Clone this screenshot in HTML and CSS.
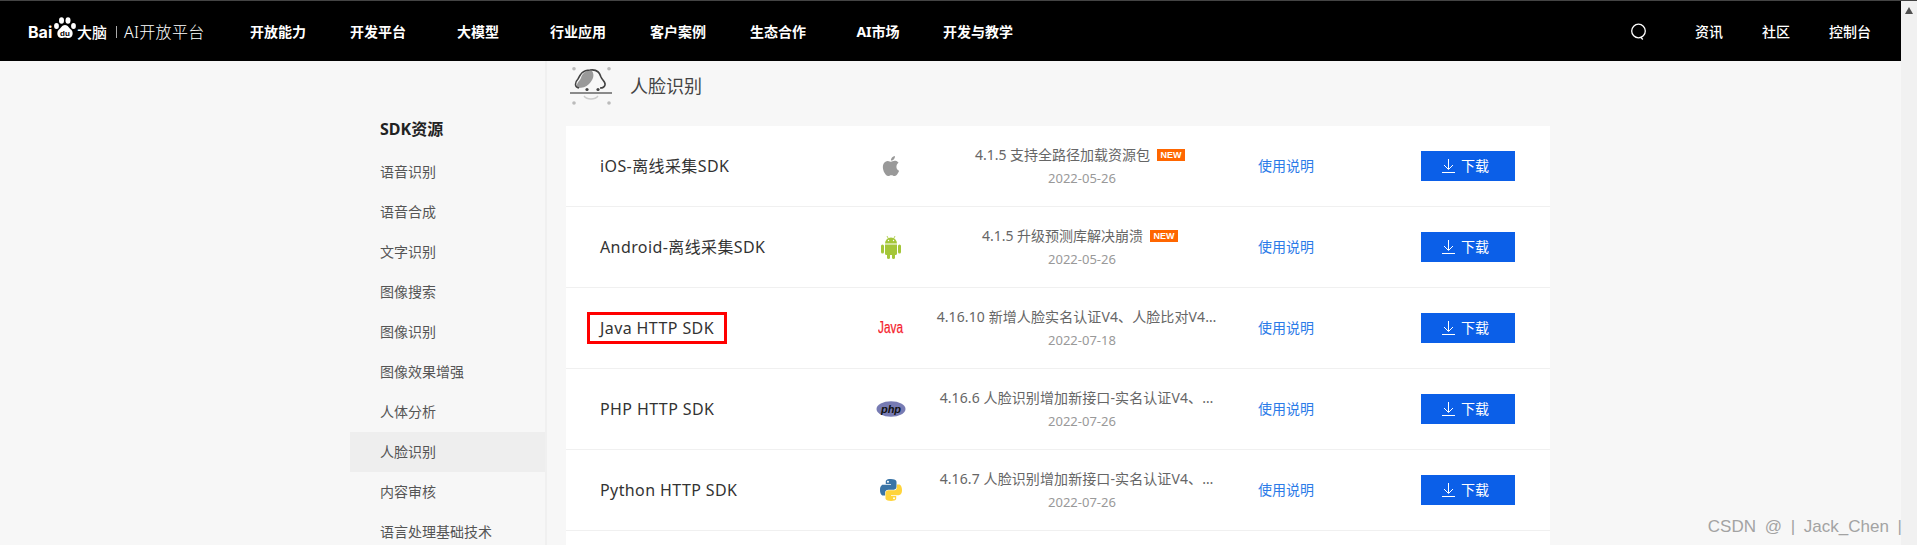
FILE: index.html
```html
<!DOCTYPE html>
<html lang="zh-CN">
<head>
<meta charset="utf-8">
<title>SDK资源</title>
<link rel="stylesheet" href="styles.css">
</head>
<body>
<div class="root">
  <div class="page">
    <header class="header">
      <div class="logo">
        <span class="logo-bai">Bai</span>
        <svg class="logo-paw" width="24" height="24" viewBox="0 0 24 24">
          <g fill="#fff">
            <ellipse cx="3.500" cy="10" rx="2.400" ry="3"/>
            <ellipse cx="8.500" cy="4.500" rx="2.500" ry="3.200"/>
            <ellipse cx="15" cy="4.500" rx="2.500" ry="3.200"/>
            <ellipse cx="20.500" cy="10" rx="2.400" ry="3"/>
            <path d="M12 9c3 0 4 3 6 4.500 2.500 2 2.500 8-2 8.500-1.500.2-2.500-.5-4-.5s-2.500.7-4 .5c-4.500-.5-4.500-6.500-2-8.500C8 12 9 9 12 9z"/>
          </g>
          <text class="logo-du" x="12" y="19.500" text-anchor="middle">du</text>
        </svg>
        <span class="logo-brain">大脑</span>
        <span class="logo-sep"></span>
        <span class="logo-ai">AI开放平台</span>
      </div>
      <nav class="nav">
        <a class="nav-item">开放能力</a>
        <a class="nav-item">开发平台</a>
        <a class="nav-item">大模型</a>
        <a class="nav-item">行业应用</a>
        <a class="nav-item">客户案例</a>
        <a class="nav-item">生态合作</a>
        <a class="nav-item">AI市场</a>
        <a class="nav-item">开发与教学</a>
      </nav>
      <div class="tools">
        <svg class="search" width="17" height="17" viewBox="0 0 17 17" fill="none" stroke="#fff" stroke-width="1.300">
          <circle cx="8.500" cy="8" r="6.800"/>
          <path d="M11 14.500l1.800 2"/>
        </svg>
        <a class="tool">资讯</a>
        <a class="tool">社区</a>
        <a class="tool">控制台</a>
      </div>
    </header>
    <main class="main">
      <aside class="side">
        <h3 class="side-title">SDK资源</h3>
        <a class="side-item">语音识别</a>
        <a class="side-item">语音合成</a>
        <a class="side-item">文字识别</a>
        <a class="side-item">图像搜索</a>
        <a class="side-item">图像识别</a>
        <a class="side-item">图像效果增强</a>
        <a class="side-item">人体分析</a>
        <a class="side-item active">人脸识别</a>
        <a class="side-item">内容审核</a>
        <a class="side-item">语言处理基础技术</a>
      </aside>
      <section class="content">
        <div class="title-bar">
          <svg width="42" height="38" viewBox="0 0 42 38">
            <g fill="#bbb">
              <circle cx="4" cy="1.800" r="1.800"/>
              <circle cx="39" cy="1.800" r="1.800"/>
              <circle cx="4" cy="36" r="1.800"/>
              <circle cx="39" cy="36" r="1.800"/>
            </g>
            <path d="M8 21C5 17 9 15 11 11 12 6 17 3 22 4c3 4 1 9-3 13-3 3-7 4-11 4z" fill="#999"/>
            <path d="M9 21C4 20 5 15 8 12 10 8 12 3 20 3c7-1 10 3 11 7 1 3 5 5 4 8-.5 2-2 3-5 3" fill="none" stroke="#444" stroke-width="1.600"/>
            <circle cx="17" cy="22.500" r="1.600" fill="#444"/>
            <circle cx="28" cy="22.500" r="1.600" fill="#444"/>
            <path d="M0 26h42" stroke="#666" stroke-width="1.600"/>
            <path d="M14 29c3 4 11 4 14 0" fill="none" stroke="#ccc" stroke-width="1.300"/>
          </svg>
          <h2 class="title">人脸识别</h2>
        </div>
        <div class="card">
          <div class="row">
            <span class="name">iOS-离线采集SDK</span>
            <span class="icon">
              <svg width="24" height="24" viewBox="0 0 24 24" fill="#999"><path d="M18.710 19.500c-.83 1.240-1.710 2.450-3.050 2.470-1.340.03-1.770-.79-3.290-.79-1.530 0-2 .77-3.270.82-1.310.05-2.300-1.320-3.140-2.530C4.250 17 2.940 12.450 4.700 9.390c.87-1.520 2.430-2.480 4.120-2.510 1.280-.02 2.500.87 3.290.87.78 0 2.260-1.070 3.810-.91.65.03 2.470.26 3.640 1.980-.09.06-2.170 1.280-2.150 3.810.03 3.020 2.650 4.030 2.680 4.040-.03.07-.42 1.440-1.380 2.830M13 3.500c.73-.83 1.940-1.460 2.940-1.500.13 1.170-.34 2.350-1.040 3.190-.69.85-1.830 1.510-2.950 1.420-.15-1.150.41-2.350 1.050-3.110z"/></svg>
            </span>
            <div class="info">
              <div class="desc">4.1.5 支持全路径加载资源包<span class="badge">NEW</span></div>
              <div class="date">2022-05-26</div>
            </div>
            <a class="guide">使用说明</a>
            <a class="btn"><svg width="13" height="14" viewBox="0 0 13 14" fill="none" stroke="#fff"><path d="M6.500 0v10M2 6l4.500 4.500L11 6M0 13.500h13"/></svg>下载</a>
          </div>
          <div class="row">
            <span class="name">Android-离线采集SDK</span>
            <span class="icon">
              <svg width="20" height="23" viewBox="0 0 20 23" fill="#a4c639"><path d="M4 7.500a6 6 0 0 1 12 0zM4 8.500h12v9a1.500 1.500 0 0 1-1.500 1.500h-9A1.500 1.500 0 0 1 4 17.500z"/><rect x="0" y="8.500" width="3" height="9" rx="1.500"/><rect x="17" y="8.500" width="3" height="9" rx="1.500"/><rect x="6" y="17" width="3" height="6" rx="1.500"/><rect x="11" y="17" width="3" height="6" rx="1.500"/><path d="M6 0l1.500 3M14 0l-1.500 3" stroke="#a4c639" stroke-width=".8"/><circle cx="7.500" cy="4.500" r=".7" fill="#fff"/><circle cx="12.500" cy="4.500" r=".7" fill="#fff"/></svg>
            </span>
            <div class="info">
              <div class="desc">4.1.5 升级预测库解决崩溃<span class="badge">NEW</span></div>
              <div class="date">2022-05-26</div>
            </div>
            <a class="guide">使用说明</a>
            <a class="btn"><svg width="13" height="14" viewBox="0 0 13 14" fill="none" stroke="#fff"><path d="M6.500 0v10M2 6l4.500 4.500L11 6M0 13.500h13"/></svg>下载</a>
          </div>
          <div class="row">
            <span class="name marked">Java HTTP SDK</span>
            <span class="icon">
              <svg width="26" height="16" viewBox="0 0 26 16"><text class="java" x="0" y="13" textLength="25" lengthAdjust="spacingAndGlyphs">Java</text></svg>
            </span>
            <div class="info">
              <div class="desc long">4.16.10 新增人脸实名认证V4、人脸比对V4…</div>
              <div class="date">2022-07-18</div>
            </div>
            <a class="guide">使用说明</a>
            <a class="btn"><svg width="13" height="14" viewBox="0 0 13 14" fill="none" stroke="#fff"><path d="M6.500 0v10M2 6l4.500 4.500L11 6M0 13.500h13"/></svg>下载</a>
          </div>
          <div class="row">
            <span class="name">PHP HTTP SDK</span>
            <span class="icon">
              <svg width="30" height="16" viewBox="0 0 30 16"><ellipse cx="15" cy="8" rx="14.500" ry="7.800" fill="#777bb3"/><text class="php" x="15" y="11.500" text-anchor="middle">php</text></svg>
            </span>
            <div class="info">
              <div class="desc long">4.16.6 人脸识别增加新接口-实名认证V4、…</div>
              <div class="date">2022-07-26</div>
            </div>
            <a class="guide">使用说明</a>
            <a class="btn"><svg width="13" height="14" viewBox="0 0 13 14" fill="none" stroke="#fff"><path d="M6.500 0v10M2 6l4.500 4.500L11 6M0 13.500h13"/></svg>下载</a>
          </div>
          <div class="row">
            <span class="name">Python HTTP SDK</span>
            <span class="icon">
              <svg width="22" height="22" viewBox="0 0 24 24">
                <path fill="#3a74a6" fill-rule="evenodd" d="M11.900 0C6 0 6.300 2.600 6.300 2.600V5.400H12v.9H4S0 5.800 0 12c0 6.200 3.500 6 3.500 6h2.100v-2.900s-.1-3.500 3.400-3.500h5.800s3.200 0 3.200-3.200V3.200S18.500 0 11.900 0zM8.700 1.900a1.100 1.100 0 1 1 0 2.200 1.100 1.100 0 0 1 0-2.200z"/>
                <path fill="#ffd43b" fill-rule="evenodd" transform="rotate(180 12 12)" d="M11.900 0C6 0 6.300 2.600 6.300 2.600V5.400H12v.9H4S0 5.800 0 12c0 6.200 3.500 6 3.500 6h2.100v-2.900s-.1-3.500 3.400-3.500h5.800s3.200 0 3.200-3.200V3.200S18.500 0 11.900 0zM8.700 1.900a1.100 1.100 0 1 1 0 2.200 1.100 1.100 0 0 1 0-2.200z"/>
              </svg>
            </span>
            <div class="info">
              <div class="desc long">4.16.7 人脸识别增加新接口-实名认证V4、…</div>
              <div class="date">2022-07-26</div>
            </div>
            <a class="guide">使用说明</a>
            <a class="btn"><svg width="13" height="14" viewBox="0 0 13 14" fill="none" stroke="#fff"><path d="M6.500 0v10M2 6l4.500 4.500L11 6M0 13.500h13"/></svg>下载</a>
          </div>
        </div>
      </section>
    </main>
  </div>
  <div class="scrollbar"><span class="scroll-up"></span></div>
  <div class="watermark">CSDN @ | Jack_Chen |</div>
</div>
</body>
</html>
```
FILE: styles.css
```css
* { box-sizing: border-box; }
html, body { margin: 0; height: 100%; overflow: hidden; }
body {
  font-family: "Noto Sans", "Noto Sans CJK SC", sans-serif;
  background: #f7f7f7;
  color: #333;
}
.root {
  position: relative;
  display: flex;
  height: 545px;
  border-top: 1px solid #444;
  overflow: hidden;
}
.page { flex: 1; min-width: 0; display: flex; flex-direction: column; }
.scrollbar { width: 16px; background: #f1f1f1; padding: 6px 0 0 4px; }
.scroll-up {
  display: block;
  width: 0;
  border-left: 4px solid transparent;
  border-right: 4px solid transparent;
  border-bottom: 7px solid #505050;
}
.watermark {
  position: absolute;
  right: 15px;
  bottom: 7px;
  font: 17px/22px "Liberation Sans", sans-serif;
  word-spacing: 4px;
  color: #a3a3a3;
  white-space: nowrap;
}

.header {
  flex: none;
  display: flex;
  align-items: center;
  height: 60px;
  padding: 1px 30px 0 0;
  background: #000;
  color: #fff;
}
.logo { display: flex; align-items: center; width: 228px; padding-left: 28px; }
.logo-bai { font: 700 16px/24px Inter, sans-serif; width: 25px; }
.logo-paw { margin-top: -7px; }
.logo-du { font: 700 8px "Liberation Sans", sans-serif; fill: #000; }
.logo-brain { font-size: 15px; line-height: 24px; font-weight: 500; }
.logo-sep { width: 1px; height: 12px; background: #aaa; margin: 0 7px 0 9px; }
.logo-ai { font-size: 16px; line-height: 24px; font-weight: 300; letter-spacing: .3px; }
.nav { display: flex; }
.nav-item { width: 100px; text-align: center; font-size: 14px; line-height: 20px; font-weight: 700; }
.tools { margin-left: auto; display: flex; align-items: center; gap: 39px; }
.search { margin-right: 9px; }
.tool { font-size: 14px; line-height: 20px; font-weight: 500; }

.main { flex: 1; min-height: 0; display: flex; padding-left: 350px; }
.side {
  flex: none;
  width: 197px;
  padding-top: 56px;
  border-right: 2px solid #f0f0f0;
}
.side-title { margin: 0 0 11px 30px; font-size: 16px; line-height: 24px; font-weight: 700; color: #222; }
.side-item { display: block; height: 40px; padding-left: 30px; font-size: 14px; line-height: 40px; color: #555; }
.side-item.active { background: #eee; }
.content { flex: none; width: 984px; margin-left: 19px; display: flex; flex-direction: column; }
.title-bar { flex: none; height: 65px; padding: 6px 0 0 4px; display: flex; align-items: flex-start; gap: 18px; }
.title { margin: 0; font-size: 18px; line-height: 38px; font-weight: 400; color: #444; }
.card { flex: 1; background: #fff; }
.row {
  display: grid;
  grid-template-columns: 260px 62px 316px 183px 94px;
  align-items: center;
  height: 81px;
  padding: 0 35px 0 34px;
  border-bottom: 1px solid #f0f0f0;
}
.name { justify-self: start; position: relative; font-size: 16px; line-height: 24px; color: #333; white-space: nowrap; letter-spacing: .4px; }
.marked::after {
  content: "";
  position: absolute;
  left: -13px;
  right: -13px;
  top: -4px;
  bottom: -4px;
  border: 3px solid #f00;
}
.icon { display: flex; justify-content: center; align-items: center; }
.java { font: 400 16px "Liberation Sans", sans-serif; fill: #f5222d; stroke: #f5222d; stroke-width: .25px; }
.php { font: italic 700 11px "Liberation Sans", sans-serif; fill: #111; }
.info { align-self: start; padding-top: 17px; text-align: center; white-space: nowrap; }
.desc { font-size: 14px; line-height: 24px; color: #666; }
.desc.long { padding-right: 7px; letter-spacing: .1px; }
.date { margin-top: -1px; padding-left: 4px; font-size: 13px; line-height: 24px; color: #999; }
.badge {
  display: inline-block;
  width: 28px;
  height: 12px;
  margin-left: 7px;
  background: #f60;
  color: #fff;
  font: 700 9px/12px "Liberation Sans", sans-serif;
  text-align: center;
  vertical-align: 2px;
}
.guide { padding-left: 20px; font-size: 14px; line-height: 20px; color: #2b7be8; }
.btn {
  display: flex;
  align-items: center;
  justify-content: center;
  gap: 6px;
  height: 30px;
  padding-right: 5px;
  background: #0b5fe8;
  color: #fff;
  font-size: 14px;
  line-height: 30px;
}
```
